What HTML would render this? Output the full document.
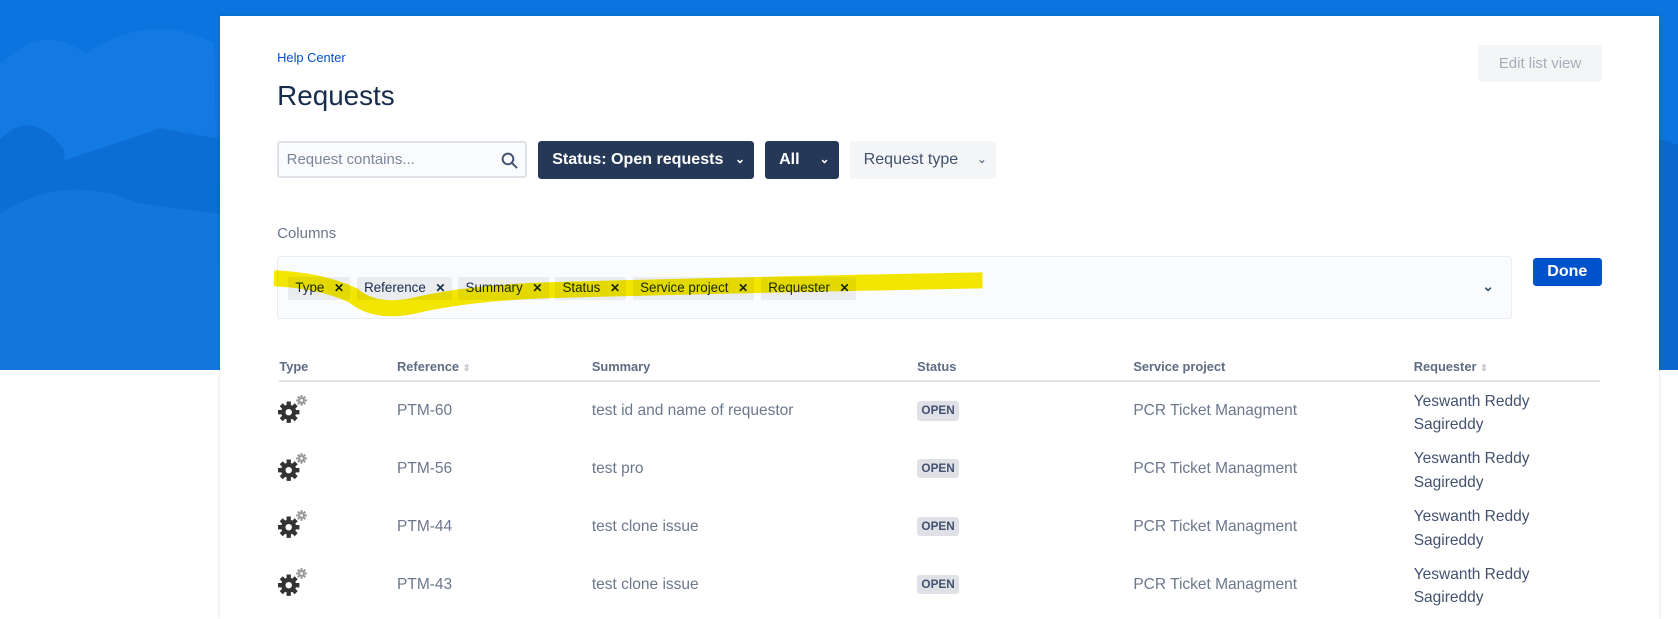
<!DOCTYPE html>
<html><head><meta charset="utf-8"><style>
html,body{margin:0;padding:0;overflow:hidden;background:#fff}
body{width:1678px;height:619px}
#w{width:1568px;height:578px;position:relative;zoom:1.0702;font-family:"Liberation Sans",sans-serif;overflow:hidden}
.bg{position:absolute;left:0;top:0;width:1568px;height:346px;background:#0b74de;overflow:hidden}
.card{position:absolute;left:206px;top:15px;width:1344px;height:563px;background:#fff;box-shadow:0 0 3px rgba(0,0,0,.15)}
.a{position:absolute;white-space:nowrap}
.btn{position:absolute;height:35px;line-height:35px;border-radius:3px;font-size:15px}
.chip{display:inline-block;background:#ebecf0;height:21px;line-height:21px;font-size:12.5px;color:#172b4d;padding:0 6px 0 7px;margin-right:6px;border-radius:2px}
.chip b{margin-left:9px;font-size:11px}
.th{position:absolute;top:335px;font-size:12px;font-weight:bold;color:#5e6c84}
.td{position:absolute;font-size:14.5px;color:#6b778c}
.lz{position:absolute;background:#dfe1e6;color:#42526e;font-size:11px;font-weight:bold;padding:0 4px;height:18px;line-height:18px;border-radius:3px}
</style></head><body><div id="w">
<div class="bg">
<svg width="1568" height="346" style="position:absolute;left:0;top:0">
<path d="M0 60 Q40 20 80 50 Q140 10 200 40 L206 346 L0 346Z" fill="#1a80e6" opacity=".5"/>
<path d="M0 130 Q30 100 60 140 L60 150 L150 120 L206 130 L206 346 L0 346Z" fill="#0a68cf" opacity=".7"/>
<path d="M0 200 Q60 160 130 190 L206 200 L206 346 L0 346Z" fill="#1a80e6" opacity=".5"/>
<path d="M1550 130 L1568 135 L1568 346 L1550 346Z" fill="#0a68cf"/>
</svg>
</div>
<div class="card"></div>
<div class="a" style="left:259px;top:47px;font-size:12px;color:#0052cc">Help Center</div>
<div class="a" style="left:259px;top:75px;font-size:26px;color:#172b4d">Requests</div>
<div class="btn" style="left:1381px;top:42px;width:116px;background:#f4f5f7;color:#a5adba;text-align:center;font-size:14px">Edit list view</div>
<div class="btn" style="left:259px;top:132px;width:230px;height:31px;line-height:31px;background:#fafbfc;border:2px solid #dfe1e6;color:#7a869a;font-size:14px"><span style="margin-left:7px">Request contains...</span>
<svg width="16" height="16" style="position:absolute;right:7px;top:8px"><circle cx="6.5" cy="6.5" r="5" fill="none" stroke="#42526e" stroke-width="1.8"/><path d="M10 10l5 5" stroke="#42526e" stroke-width="1.8"/></svg></div>
<div class="btn" style="left:503px;top:132px;width:202px;background:#253858;color:#fff;font-weight:bold"><span style="margin-left:13px">Status: Open requests</span><span style="position:absolute;right:9px;font-size:11px">&#x2304;</span></div>
<div class="btn" style="left:715px;top:132px;width:69px;background:#253858;color:#fff;font-weight:bold"><span style="margin-left:13px">All</span><span style="position:absolute;right:9px;font-size:11px">&#x2304;</span></div>
<div class="btn" style="left:794px;top:132px;width:137px;background:#f4f5f7;color:#42526e"><span style="margin-left:13px">Request type</span><span style="position:absolute;right:9px;font-size:11px">&#x2304;</span></div>
<div class="a" style="left:259px;top:210px;font-size:14px;color:#6b778c">Columns</div>
<div class="a" style="left:259px;top:239px;width:1152px;height:57px;background:#fafbfc;border:1px solid #ebecf0;border-radius:3px"></div>
<div class="a" style="left:269px;top:259px"><span class="chip">Type<b>✕</b></span><span class="chip">Reference<b>✕</b></span><span class="chip">Summary<b>✕</b></span><span class="chip">Status<b>✕</b></span><span class="chip">Service project<b>✕</b></span><span class="chip">Requester<b>✕</b></span></div>
<svg width="1568" height="346" style="position:absolute;left:0;top:0;mix-blend-mode:multiply"><path d="M256 260 Q300 262 330 276 Q350 293 385 286 Q440 273 520 271 Q700 266 918 262" stroke="#f7ea00" stroke-width="15" fill="none"/></svg>
<div class="a" style="left:1385px;top:260px;font-size:13px;color:#42526e;font-weight:bold">&#x2304;</div>
<div class="btn" style="left:1432px;top:241px;width:65px;height:26px;line-height:26px;background:#0052cc;color:#fff;font-weight:bold;text-align:center">Done</div>
<div class="th" style="left:261px">Type</div>
<div class="th" style="left:371px">Reference <span style="color:#c1c7d0;font-size:9px">⇕</span></div>
<div class="th" style="left:553px">Summary</div>
<div class="th" style="left:857px">Status</div>
<div class="th" style="left:1059px">Service project</div>
<div class="th" style="left:1321px">Requester <span style="color:#c1c7d0;font-size:9px">⇕</span></div>
<div class="a" style="left:261px;top:355px;width:1234px;height:2px;background:#dfe1e6"></div>
<div id="rows"></div>
<script>
var d=[["PTM-60","test id and name of requestor"],["PTM-56","test pro"],["PTM-44","test clone issue"],["PTM-43","test clone issue"]],h="";
d.forEach(function(r,i){var y=376+i*54;
h+='<svg class="a" style="left:260px;top:'+(y-8)+'px" width="30" height="30"><g transform="translate(10,17)"><circle r="7" fill="#333"/><g stroke="#333" stroke-width="4"><path d="M0 -10V10M-10 0H10M-7 -7L7 7M-7 7L7 -7"/></g><circle r="3" fill="#fff"/></g><g transform="translate(22,6)"><circle r="3" fill="#999"/><g stroke="#999" stroke-width="2"><path d="M0 -5V5M-5 0H5M-3.5 -3.5L3.5 3.5M-3.5 3.5L3.5 -3.5"/></g><circle r="1.3" fill="#fff"/></g></svg>';
h+='<div class="td" style="left:371px;top:'+y+'px">'+r[0]+'</div><div class="td" style="left:553px;top:'+y+'px">'+r[1]+'</div>';
h+='<div class="lz" style="left:857px;top:'+(y-1)+'px">OPEN</div><div class="td" style="left:1059px;top:'+y+'px">PCR Ticket Managment</div>';
h+='<div class="td" style="left:1321px;top:'+(y-12)+'px;color:#42526e;line-height:22px">Yeswanth Reddy<br>Sagireddy</div>';});
document.getElementById("rows").innerHTML=h;
</script>
</div></body></html>
